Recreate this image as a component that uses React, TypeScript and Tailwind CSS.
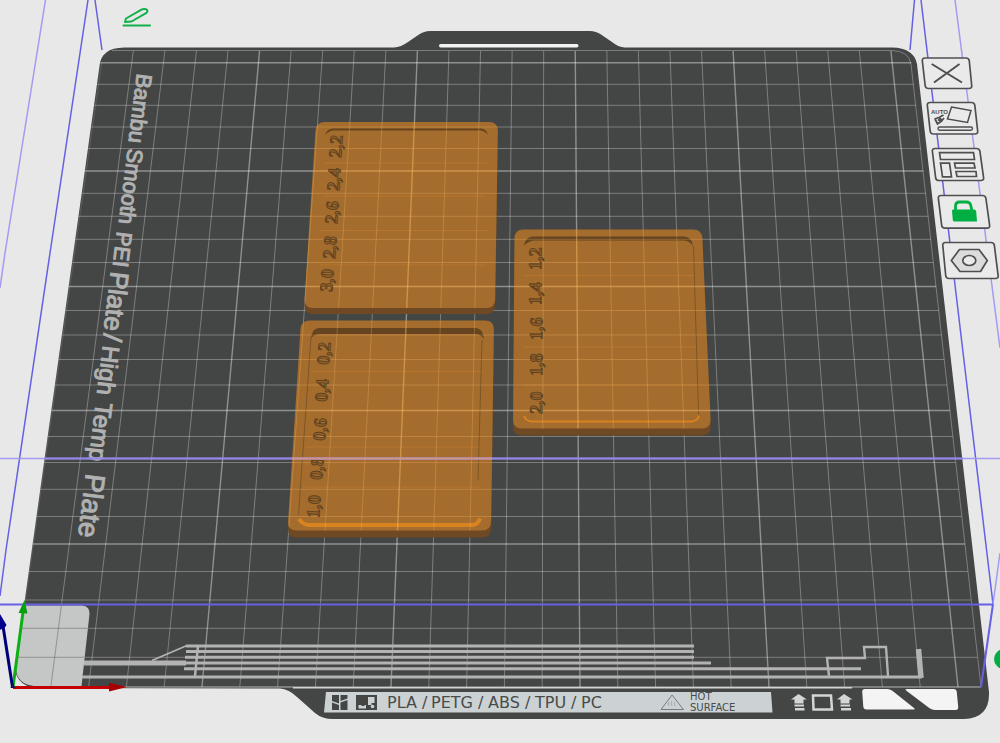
import React from 'react';

type Point = [number, number];

// Horizontal grid lines, back of the bed first. Every fifth one is heavier.
const ROWS = [
  62.7, 84.3, 105.3, 127, 148.5, 171, 193.3, 216.3, 239.3, 262.5, 286.5, 310.5, 335,
  359.5, 385, 410.5, 436.5, 462.5, 489.3, 516.5, 544, 571.5, 600, 628.3, 657.3, 687,
];

const BED_TOP = 51;
const BED_BOTTOM = 687;

const PATCH = 'M24.500 605.500H82Q90 606 89.500 614L81.500 686H34Q17 684 16 669Z';

const columnTop = (i: number) => 101.7 + 31.57 * i;
const columnBottom = (i: number) => 13 + 37.8 * i;
const columnAt = (i: number, y: number) => {
  const t = (y - BED_TOP) / (BED_BOTTOM - BED_TOP);
  return columnTop(i) + (columnBottom(i) - columnTop(i)) * t;
};

const roundPoly = (points: Point[], radius: number) => {
  const toward = (a: Point, b: Point): Point => {
    const len = Math.hypot(b[0] - a[0], b[1] - a[1]);
    const k = Math.min(radius, len / 2) / len;
    return [a[0] + (b[0] - a[0]) * k, a[1] + (b[1] - a[1]) * k];
  };
  const parts = points.map((p, i) => {
    const before = toward(p, points[(i + points.length - 1) % points.length]);
    const after = toward(p, points[(i + 1) % points.length]);
    return `${i === 0 ? 'M' : 'L'}${before.join(' ')}Q${p.join(' ')} ${after.join(' ')}`;
  });
  return parts.join('') + 'Z';
};

interface Label {
  text: string;
  x: number;
  y: number;
}

interface Model {
  name: string;
  face: Point[];
  skirt: number;
  shadow: string;
  rim?: string;
  walls: string;
  layers: string;
  tilt: number;
  labels: Label[];
}

const MODELS: Model[] = [
  {
    name: 'swatch-2-3',
    face: [[316, 122], [498, 122], [495, 308], [304, 308]],
    skirt: 6,
    shadow: 'M325 135Q327 128.500 333 128.500H481Q486 128.500 488 134.500Q484 130.500 480 130.500H334Q329 130.500 325 135Z',
    walls: '',
    layers: 'M325 163H487M323 196H486M321 230.500H487M319 265H486',
    tilt: -86,
    labels: [
      { text: '2,2', x: 341, y: 158 },
      { text: '2,4', x: 339, y: 191 },
      { text: '2,6', x: 337, y: 224 },
      { text: '2,8', x: 335, y: 259 },
      { text: '3,0', x: 332, y: 292 },
    ],
  },
  {
    name: 'swatch-1-2',
    face: [[514.5, 229.5], [702, 229.5], [711, 428.5], [513, 428.5]],
    skirt: 7,
    shadow: 'M524 246Q525 237 533 236.500H684Q692 237 693 246Q690 241 684 240.500H534Q528 241 524 246Z',
    rim: 'M524 416Q526 421 532 421.500H692Q697 421 699 416',
    walls: 'M693.500 246L698.500 414',
    layers: 'M525 275.500H694M523 347H697M523 385H698',
    tilt: -89,
    labels: [
      { text: '1,2', x: 541, y: 270 },
      { text: '1,4', x: 541, y: 305 },
      { text: '1,6', x: 542, y: 340 },
      { text: '1,8', x: 542, y: 376 },
      { text: '2,0', x: 542, y: 414 },
    ],
  },
  {
    name: 'swatch-0-1',
    face: [[301, 320.5], [494, 320.5], [491, 530.5], [287.5, 530.5]],
    skirt: 7,
    shadow: 'M311 338Q312 328.500 319 328H476Q483 328.500 484 339Q480 334 475 334H320Q315 334 311 338Z',
    rim: 'M299 519Q303 525 309 525H472Q478 525 480 518.500',
    walls: 'M311 337L298.500 515M482 340L478 480',
    layers: 'M311 371.500H483M306 447H481M303 487H480',
    tilt: -86,
    labels: [
      { text: '0,2', x: 329, y: 365 },
      { text: '0,4', x: 327, y: 402 },
      { text: '0,6', x: 325, y: 441 },
      { text: '0,8', x: 322, y: 480 },
      { text: '1,0', x: 319, y: 518 },
    ],
  },
];

const BED_NAME = [
  { text: 'Bambu', x: 137, y: 73, size: 'text-[22px]' },
  { text: 'Smooth', x: 128, y: 148, size: 'text-[22px]' },
  { text: 'PEI', x: 117, y: 231, size: 'text-[22px]' },
  { text: 'Plate', x: 111, y: 271, size: 'text-[26px]' },
  { text: '/', x: 104, y: 333, size: 'text-[26px]' },
  { text: 'High', x: 103, y: 345, size: 'text-[24px]' },
  { text: 'Temp', x: 96, y: 402, size: 'text-[24px]' },
  { text: 'Plate', x: 86, y: 473, size: 'text-[28px]' },
];

const MATERIALS = [
  { text: 'PLA', x: 387 },
  { text: '/', x: 422 },
  { text: 'PETG', x: 431 },
  { text: '/', x: 478 },
  { text: 'ABS', x: 488 },
  { text: '/', x: 525 },
  { text: 'TPU', x: 535 },
  { text: '/', x: 571 },
  { text: 'PC', x: 581 },
];

interface GridProps {
  color: string;
  light: number;
  heavy: number;
  clip?: string;
}

const Grid: React.FC<GridProps> = ({ color, light, heavy, clip }) => (
  <g stroke={color} fill="none" clipPath={clip ? `url(#${clip})` : undefined}>
    {Array.from({ length: 26 }, (_, i) => (
      <line
        key={i}
        x1={columnTop(i)}
        y1={i === 0 ? 62 : BED_TOP}
        x2={columnBottom(i)}
        y2={BED_BOTTOM}
        strokeWidth={i % 5 === 0 ? 1.4 : 1}
        strokeOpacity={i === 0 ? 0.1 : i % 5 === 0 ? heavy : light}
      />
    ))}
    {ROWS.map((y, i) => (
      <line
        key={y}
        x1={columnAt(0, y)}
        y1={y}
        x2={columnAt(25.6, y)}
        y2={y}
        strokeWidth={i % 5 === 0 ? 1.5 : 1}
        strokeOpacity={i % 5 === 0 ? heavy : light}
      />
    ))}
    <path d="M112 50.500H892Q909 51 911 64L981 687" strokeOpacity={light} />
  </g>
);

const ModelShape: React.FC<{ model: Model }> = ({ model }) => {
  const skirt = model.face.map(([x, y], i): Point => (i < 2 ? [x, y + 20] : [x, y + model.skirt]));
  return (
    <g>
      <path d={roundPoly(skirt, 9)} fill="#6e4924" />
      <path d={roundPoly(model.face, 9)} fill="#a46d2e" />
      <path d={model.layers} stroke="#c9812e" strokeOpacity="0.5" fill="none" />
      <path d={model.walls} stroke="#7d5527" fill="none" />
      <path d={model.shadow} fill="#65441f" />
      {model.rim && <path d={model.rim} fill="none" stroke="#d98220" strokeWidth={model.name === 'swatch-0-1' ? 4 : 2} />}
    </g>
  );
};

const ModelLabels: React.FC<{ model: Model }> = ({ model }) => (
  <g className="font-['Liberation_Serif',serif] text-[18px] font-bold" fill="#936127" stroke="#5e4222" strokeWidth="0.900">
    {model.labels.map(l => (
      <text key={l.text} x={l.x} y={l.y} transform={`rotate(${model.tilt} ${l.x} ${l.y})`}>{l.text}</text>
    ))}
  </g>
);

const BedPlate: React.FC = () => (
  <g>
    <path
      d="M99.500 66Q101 48 124 47.500H394Q401 47 408 42L419 34.500Q424 31 430 31H590Q596 31 601 34.500L612 42Q618 47 625 47.500H892Q914 48 917 64L989 692Q990 718 964 719H333Q322 719 315 713L297 697Q289 689 280 688.500L36 688Q18 686 15 670Z"
      fill="#444645"
    />
    <rect x="439" y="44" width="139.500" height="3.500" rx="1.700" fill="#f2f2f2" />
  </g>
);

const BedName: React.FC = () => (
  <g className="font-['Liberation_Sans',sans-serif]" fill="#b0b1b0" stroke="#b0b1b0" strokeWidth="1">
    {BED_NAME.map(w => (
      <text key={w.y} x={w.x} y={w.y} className={w.size} transform={`rotate(97 ${w.x} ${w.y})`}>{w.text}</text>
    ))}
  </g>
);

const PurgeTracks: React.FC = () => (
  <g stroke="#b2b3b2" fill="none">
    <path d="M186 646H694M186 651.500H694M185 657.300H694M185 663H711M184 668.700H861" strokeWidth="3" />
    <path d="M82 677H922" strokeWidth="3" />
    <path d="M84 663H186" strokeWidth="5" />
    <path d="M152 660.500L187 645.500" strokeWidth="1.800" />
    <path d="M198 646L195 676" strokeWidth="2.500" />
    <path d="M829 676L827 658H865L864 647H886L888 676" strokeWidth="2.400" />
    <path d="M918.500 649L921 678" strokeWidth="5.500" />
    <path d="M293 687.800H852" stroke="#d0d3d3" strokeWidth="1.500" />
  </g>
);

const FrontStrip: React.FC = () => (
  <g>
    <path d="M326 692H771L772.500 712.500H324Z" fill="#ccd2d3" />
    {/* Maker's mark */}
    <path d="M332 695H339V703.500L332 701Z M332 702.500L339 705V710H332Z M340.500 695H347.500V698.500L340.500 701Z M340.500 702.500L347.500 700V710H340.500Z" fill="#444645" />
    <rect x="356" y="695" width="21" height="15" fill="#444645" />
    <path d="M358.500 708.500V705H361.500V706H364.500V705H366V708.500Z M368 697H374.500V703H371.500V705H368Z" fill="#ccd2d3" />
    <circle cx="372.500" cy="706.500" r="1.800" fill="#ccd2d3" />

    <g className="font-['DejaVu_Sans',sans-serif] text-[16px]" fill="#484b4b">
      {MATERIALS.map(m => (
        <text key={m.x} x={m.x} y="708">{m.text}</text>
      ))}
    </g>

    <path d="M672 695L683.500 709.500H661Z" fill="none" stroke="#777b7b" strokeWidth="1" strokeLinejoin="round" />
    <path d="M669 706Q667.500 704 669 702M672 706Q670.500 703.500 672 701M675 706Q673.500 704 675 702" fill="none" stroke="#999d9d" strokeWidth="0.800" />
    <g className="font-['DejaVu_Sans',sans-serif] text-[10px]" fill="#484b4b">
      <text x="690" y="700">HOT</text>
      <text x="690" y="711">SURFACE</text>
    </g>

    {/* Alignment arrows */}
    <g fill="#d4d6d6">
      <path d="M798.500 694L807 699.500H803.500V703.500H794.500V699.500H791Z M794.500 704.500H804V706.500H794.500Z M795 708H804.500V710.500H795Z" />
      <path d="M844 694L852.500 699.500H849.500V703.500H840.500V699.500H837Z M840.500 704.500H850V706.500H840.500Z M841 708H851V710.500H841Z" />
    </g>
    <path d="M813 695.500H831L832 709.500H813.500Z" fill="none" stroke="#d4d6d6" strokeWidth="2.500" />

    <path d={roundPoly([[862, 689], [890, 689], [916, 709.5], [863.5, 709.5]], 3)} fill="#f4f4f4" />
    <path d={roundPoly([[904, 689], [956.5, 689], [958.5, 710], [932, 710]], 3)} fill="#f4f4f4" />
  </g>
);

const BuildVolume: React.FC = () => (
  <g fill="none" stroke="#6560e4" strokeWidth="1.500">
    <path d="M45.500 0L5 253L0 288" stroke="#a39bf3" />
    <path d="M88 0L50 253L6 550L0 596M95 0L102 50" />
    <path d="M914.500 0L910 50M921 0L955 285L993 604" />
    <path d="M955 0L1000 348" stroke="#a39bf3" />
    <path d="M1000 553L993 604" stroke="#a39bf3" />
    <path d="M993 604L981 687" strokeWidth="2" />
    <path d="M0 458.500H1000" stroke="#a39bf3" />
    <path d="M44 458.500H963" stroke="#9189ea" strokeWidth="2" />
    <path d="M0 604.500H993" strokeWidth="2" />
    {/* The volume edge picks up the material where it crosses a model */}
    <path d="M292 458.500H492" stroke="#d0948c" strokeWidth="2" />
  </g>
);

const Axes: React.FC = () => (
  <g>
    <path d="M13 687.500H111" stroke="#c40000" strokeWidth="3" />
    <path d="M109 682.800L127 687L109 691.500Z" fill="#a80000" />
    <path d="M13 687L23 612" stroke="#0db014" strokeWidth="3" />
    <path d="M18.500 613L24.500 600L27.500 613.500Z" fill="#0a9d10" />
    <path d="M12.500 687L3 626" stroke="#00007c" strokeWidth="3" />
    <path d="M-3 630L0 614L6.500 625Q4 630 -3 630Z" fill="#00008c" />
    <path d="M10.500 688L12.500 682L15 688Z" fill="#101060" />
  </g>
);

interface PlateButtonProps {
  label: string;
  className: string;
  viewBox: string;
  frame: Point[];
  children: React.ReactNode;
}

const PlateButton: React.FC<PlateButtonProps> = ({ label, className, viewBox, frame, children }) => (
  <button type="button" aria-label={label} title={label} className={`block shrink-0 cursor-pointer ${className}`}>
    <svg viewBox={viewBox} className="block w-full h-full overflow-visible" fill="none" stroke="#4f4f4f" strokeWidth="1.700">
      <path d={roundPoly(frame, 3)} fill="#eaeaea" />
      {children}
    </svg>
  </button>
);

const PlateToolbar: React.FC = () => (
  <div role="toolbar" aria-label="Plate" className="absolute top-14 left-[92.2%] flex flex-col items-start gap-[11px]">
    <PlateButton
      label="Delete all"
      className="w-[50px] h-[34px]"
      viewBox="922 56 50 34"
      frame={[[922, 58], [969, 58], [972, 88.5], [925.5, 88.5]]}
    >
      <path d="M931.700 64L962 82.500M959.500 64L934 82.500" strokeWidth="2" />
    </PlateButton>
    <PlateButton
      label="Auto orient"
      className="w-[51px] h-[35px] ml-[5px]"
      viewBox="927 101 51 35"
      frame={[[927, 102.5], [974.5, 102.5], [978, 134], [930.5, 134]]}
    >
      <path d="M951.500 107L971 110.500L967.500 122.500L947.500 119Z" strokeWidth="1.500" />
      <rect x="938" y="127" width="34.500" height="3.200" rx="1.600" strokeWidth="1.400" />
      <path d="M934.500 119L939 117.500L943.500 115M935 119L937.500 124L941 121.500L938 119.500M939 117.500L942 120.500L944 118" strokeWidth="1.800" />
      <text x="931" y="114" className="font-['Liberation_Sans',sans-serif] text-[6px] font-bold" fill="#4b4b4b" stroke="none">AUTO</text>
    </PlateButton>
    <PlateButton
      label="Arrange"
      className="w-[52px] h-[36px] ml-[10px]"
      viewBox="932 147 52 36"
      frame={[[932, 148.5], [979.5, 148.5], [984, 180.5], [936, 180.5]]}
    >
      <path d="M939.500 152.700H973.500L974.500 159.500H940.500Z M940.500 163.200H949.500L951.500 176.800H942.500Z M954.500 163.200H974L975 168H955.500Z M956 171.500H976L976.500 176.500H957Z" />
    </PlateButton>
    <PlateButton
      label="Lock plate"
      className="w-[54px] h-[37px] ml-[15px]"
      viewBox="937 194 54 37"
      frame={[[938, 195.5], [985.5, 195.5], [990, 228.2], [942, 228.2]]}
    >
      <path d="M955.500 211V206.500Q955.500 202 959.500 202H966.500Q970 202 970.800 205.500L972 211" stroke="#00ae42" strokeWidth="2.800" />
      <path d="M953 209.500H974Q976 209.500 976.200 211.500L977 221.500H954.500Q953 221.500 952.800 220L952 211Q952 209.500 953 209.500Z" fill="#00ae42" stroke="none" />
    </PlateButton>
    <PlateButton
      label="Plate settings"
      className="w-[57px] h-[39px] ml-[20px]"
      viewBox="942 242 57 39"
      frame={[[942.5, 242.5], [994, 242.5], [998.5, 278.5], [946, 278.5]]}
    >
      <path d="M951.300 260.500L959.500 249.500H979L987.300 260.500L980.500 271.500H960Z" fill="#dcdcdc" strokeLinejoin="round" />
      <ellipse cx="969.300" cy="260.500" rx="6.500" ry="5" fill="#eaeaea" />
    </PlateButton>
  </div>
);

export default function App() {
  return (
    <main className="relative w-full min-h-screen overflow-hidden bg-[#e8e8e8]">
      <svg viewBox="0 0 1000 743" className="block w-full h-auto" role="img" aria-label="Build plate with three models">
        <defs>
          <clipPath id="faces">
            {MODELS.map(m => <path key={m.name} d={roundPoly(m.face, 9)} />)}
          </clipPath>
          <clipPath id="patch">
            <path d={PATCH} />
          </clipPath>
        </defs>
        <BedPlate />
        <Grid color="#ffffff" light={0.3} heavy={0.4} />
        <path d={PATCH} fill="#c4c7c6" />
        <Grid color="#606060" light={0.5} heavy={0.3} clip="patch" />
        <BedName />
        <PurgeTracks />
        {MODELS.map(m => <ModelShape key={m.name} model={m} />)}
        <Grid color="#ffc06c" light={0.28} heavy={0.45} clip="faces" />
        {MODELS.map(m => <ModelLabels key={m.name} model={m} />)}
        <FrontStrip />
        <BuildVolume />
        <Axes />
        <circle cx="1004" cy="659" r="10" fill="#00ae42" />
      </svg>

      <button type="button" aria-label="Rename plate" title="Rename plate" className="absolute top-[7px] left-[12.2%] w-[30px] h-[22px] cursor-pointer">
        <svg viewBox="122 7 30 22" className="block w-full h-full" fill="none" stroke="#12b04b" strokeWidth="2" strokeLinecap="round" strokeLinejoin="round">
          <path d="M125 22L126 18.500L141 9.800Q143.500 8.500 146 9.200Q148.500 10.500 146.500 12.800L131.500 21.500Z" />
          <path d="M123.500 25.600H150" />
        </svg>
      </button>

      <PlateToolbar />
    </main>
  );
}
